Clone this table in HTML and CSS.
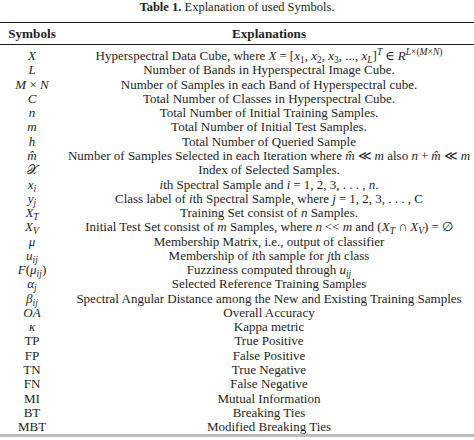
FILE: index.html
```html
<!DOCTYPE html>
<html>
<head>
<meta charset="utf-8">
<link rel="stylesheet" href="styles.css">
</head>
<body>
<div class="caption"><b>Table 1.</b> Explanation of used Symbols.</div>
<table class="symtab">
<thead>
<tr><th class="c1">Symbols</th><th class="c2">Explanations</th></tr>
</thead>
<tbody>
<tr><td><i>X</i></td><td>Hyperspectral Data Cube, where <i>X</i><span class="op">=</span>[<i>x</i><sub>1</sub>, <i>x</i><sub>2</sub>, <i>x</i><sub>3</sub>, ..., <i>x</i><sub><i>L</i></sub>]<sup><i>T</i></sup><span class="op">∈</span><i>R</i><sup><i>L</i>×(<i>M</i>×<i>N</i>)</sup></td></tr>
<tr><td><i>L</i></td><td>Number of Bands in Hyperspectral Image Cube.</td></tr>
<tr><td><i>M</i> × <i>N</i></td><td>Number of Samples in each Band of Hyperspectral cube.</td></tr>
<tr><td><i>C</i></td><td>Total Number of Classes in Hyperspectral Cube.</td></tr>
<tr><td><i>n</i></td><td>Total Number of Initial Training Samples.</td></tr>
<tr><td><i>m</i></td><td>Total Number of Initial Test Samples.</td></tr>
<tr><td><i>h</i></td><td>Total Number of Queried Sample</td></tr>
<tr><td><i>m̂</i></td><td>Number of Samples Selected in each Iteration where <i>m̂</i><span class="op">≪</span><i>m</i> also <i>n</i><span class="op">+</span><i>m̂</i><span class="op">≪</span><i>m</i></td></tr>
<tr><td><span class="script">𝒳</span></td><td>Index of Selected Samples.</td></tr>
<tr><td><i>x<sub>i</sub></i></td><td><i>i</i>th Spectral Sample and <i>i</i><span class="op">=</span>1, 2, 3, . . . , <i>n</i>.</td></tr>
<tr><td><i>y<sub>j</sub></i></td><td>Class label of <i>i</i>th Spectral Sample, where <i>j</i><span class="op">=</span>1, 2, 3, . . . , C</td></tr>
<tr><td><i>X<sub>T</sub></i></td><td>Training Set consist of <i>n</i> Samples.</td></tr>
<tr><td><i>X<sub>V</sub></i></td><td>Initial Test Set consist of <i>m</i> Samples, where <i>n</i><span class="op">&lt;&lt;</span><i>m</i> and (<i>X<sub>T</sub></i><span class="op">∩</span><i>X<sub>V</sub></i>)<span class="op">=</span>∅</td></tr>
<tr><td><i>μ</i></td><td>Membership Matrix, i.e., output of classifier</td></tr>
<tr><td><i>u<sub>ij</sub></i></td><td>Membership of <i>i</i>th sample for <i>j</i>th class</td></tr>
<tr><td><i>F</i>(<i>μ<sub>ij</sub></i>)</td><td>Fuzziness computed through <i>u<sub>ij</sub></i></td></tr>
<tr><td><i>α<sub>j</sub></i></td><td>Selected Reference Training Samples</td></tr>
<tr><td><i>β<sub>ij</sub></i></td><td>Spectral Angular Distance among the New and Existing Training Samples</td></tr>
<tr><td><i>OA</i></td><td>Overall Accuracy</td></tr>
<tr><td><i>κ</i></td><td>Kappa metric</td></tr>
<tr><td>TP</td><td>True Positive</td></tr>
<tr><td>FP</td><td>False Positive</td></tr>
<tr><td>TN</td><td>True Negative</td></tr>
<tr><td>FN</td><td>False Negative</td></tr>
<tr><td>MI</td><td>Mutual Information</td></tr>
<tr><td>BT</td><td>Breaking Ties</td></tr>
<tr><td>MBT</td><td>Modified Breaking Ties</td></tr>
</tbody>
</table>
</body>
</html>
```
FILE: styles.css
```css
html, body {
  margin: 0;
  padding: 0;
  background: #ffffff;
}
body {
  font-family: "Liberation Serif", "DejaVu Serif", serif;
  color: #1e1e1e;
  width: 474px;
}
.caption {
  text-align: center;
  font-size: 12.5px;
  line-height: 14px;
  height: 22px;
}
.symtab {
  width: 474px;
  border-collapse: collapse;
  font-size: 13px;
  border-top: 1.5px solid #1e1e1e;
  border-bottom: 3px solid #bdbdbd;
}
.symtab th {
  font-weight: bold;
  font-size: 13.2px;
  height: 21px;
  padding: 0;
  border-bottom: 1px solid #1e1e1e;
  line-height: 14px;
}
.symtab .c1 { width: 64px; }
.symtab td {
  text-align: center;
  padding: 0;
  height: 14.27px;
  line-height: 12px;
  white-space: nowrap;
}
.symtab tbody tr:first-child td {
  padding-top: 4px;
}
.symtab sub, .symtab sup {
  font-size: 9.5px;
  line-height: 0;
  vertical-align: baseline;
  position: relative;
}
.symtab sub { top: 3px; }
.symtab sup { top: -5px; }
.op {
  margin: 0 3px;
}
.script {
  font-family: "DejaVu Sans", serif;
  font-style: normal;
  line-height: 0;
}
```
